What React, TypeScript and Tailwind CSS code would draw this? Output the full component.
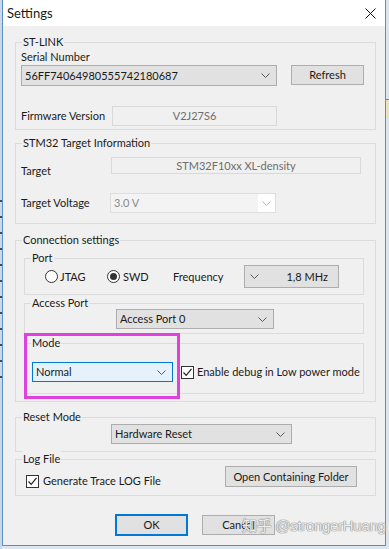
import React from "react";

function Chevron({ color = "#5a5a5a" }: { color?: string }) {
  return (
    <svg width="9" height="5" viewBox="0 0 9 5" className="shrink-0">
      <path d="M0.5 0.5 L4.5 4.5 L8.5 0.5" fill="none" stroke={color} strokeWidth="1" />
    </svg>
  );
}

function Group({
  title,
  className = "",
  children,
}: {
  title: string;
  className?: string;
  children?: React.ReactNode;
}) {
  return (
    <div className={`relative border border-[#dcdcdc] ${className}`}>
      <span className="absolute -top-[9px] left-[6px] bg-[#f0f0f0] px-px leading-[16px] whitespace-nowrap">
        {title}
      </span>
      {children}
    </div>
  );
}

function Combo({
  value,
  className = "",
}: {
  value: string;
  className?: string;
}) {
  return (
    <div
      className={`flex items-center border border-[#adadad] bg-[#e1e1e1] pl-[3px] pr-[6px] ${className}`}
    >
      <span className="flex-1 whitespace-nowrap">{value}</span>
      <Chevron />
    </div>
  );
}

function Check() {
  return (
    <div className="flex h-[13px] w-[13px] shrink-0 items-center justify-center border border-[#333333] bg-white">
      <svg width="11" height="11" viewBox="0 0 11 11">
        <path d="M1.5 5.5 L4.2 8.3 L9.5 1.8" fill="none" stroke="#222" strokeWidth="1.2" />
      </svg>
    </div>
  );
}

function Radio({ checked }: { checked?: boolean }) {
  return (
    <div className="flex h-[13px] w-[13px] shrink-0 items-center justify-center rounded-full border border-[#333333] bg-white">
      {checked && <div className="h-[7px] w-[7px] rounded-full bg-[#333333]" />}
    </div>
  );
}

export default function App() {
  return (
    <div className="relative flex h-[549px] w-[389px] overflow-hidden bg-[#d9e7f3] font-['Lato',sans-serif] text-[11px] leading-[16px] text-[#1a1a1a]">
      {/* background strip left */}
      <div className="flex h-full w-[2px] flex-col gap-[14px] bg-[#c9d9e8] pt-[200px]">
        {Array.from({ length: 12 }).map((_, i) => (
          <div key={i} className="h-[2px] w-[2px] bg-[#2e4f73]" />
        ))}
      </div>

      {/* window */}
      <div className="flex h-[546px] w-[384px] shrink-0 flex-col border-x border-b border-[#5b8fc4] bg-[#f0f0f0]">
        {/* title bar */}
        <div className="flex h-[26px] items-center bg-white">
          <span className="pl-[4px] text-[13px]">Settings</span>
          <svg width="11" height="11" viewBox="0 0 11 11" className="ml-auto mr-[9px]">
            <path d="M0.5 0.5 L10.5 10.5 M10.5 0.5 L0.5 10.5" stroke="#111" strokeWidth="1" />
          </svg>
        </div>

        <div className="flex flex-col pl-[12px] pr-[9px]">
          {/* ST-LINK */}
          <Group title="ST-LINK" className="mt-[16px] pl-[5px] pt-[6px] pb-[3px]">
            <div>Serial Number</div>
            <div className="flex items-start">
              <Combo value="56FF74064980555742180687" className="h-[21px] w-[256px]" />
              <div className="ml-[14px] flex h-[20px] w-[73px] items-center justify-center border border-[#adadad] bg-[#e1e1e1]">
                Refresh
              </div>
            </div>
            <div className="mt-[20px] flex items-center">
              <span className="w-[91px] shrink-0 whitespace-nowrap">Firmware Version</span>
              <div className="flex h-[20px] w-[165px] items-center justify-center border border-[#d9d9d9] bg-[#f0f0f0] text-[#6d6d6d]">
                V2J27S6
              </div>
            </div>
          </Group>

          {/* STM32 Target Information */}
          <Group title="STM32 Target Information" className="mt-[13px] pl-[5px] pt-[13px] pb-[10px]">
            <div className="flex items-start">
              <span className="mt-[6px] w-[90px] shrink-0">Target</span>
              <div className="flex h-[17px] w-[250px] items-center justify-center border border-[#d9d9d9] bg-[#f0f0f0] text-[#6d6d6d]">
                STM32F10xx XL-density
              </div>
            </div>
            <div className="mt-[14px] flex items-center">
              <span className="w-[89px] shrink-0 whitespace-nowrap">Target Voltage</span>
              <div className="flex h-[20px] w-[166px] items-center border border-[#dedede] bg-[#f3f3f3] text-[#8a8a8a]">
                <span className="flex-1 pl-[3px]">3.0 V</span>
                <div className="flex h-full w-[17px] items-center justify-center bg-white">
                  <Chevron color="#b5b5b5" />
                </div>
              </div>
            </div>
          </Group>

          {/* Connection settings */}
          <Group title="Connection settings" className="mt-[16px] pl-[8px] pr-[11px] pt-[17px] pb-[7px]">
            {/* Port */}
            <Group title="Port" className="pt-[6px] pb-[6px]">
              <div className="flex h-[23px] items-center">
                <div className="ml-[20px] flex w-[62px] shrink-0 items-center gap-[2px]">
                  <Radio />
                  <span>JTAG</span>
                </div>
                <div className="flex w-[66px] shrink-0 items-center gap-[3px]">
                  <Radio checked />
                  <span>SWD</span>
                </div>
                <span className="w-[71px] shrink-0">Frequency</span>
                <div className="flex h-[23px] w-[95px] items-center border border-[#adadad] bg-[#e1e1e1] pl-[5px] pr-[10px]">
                  <Chevron />
                  <span className="flex-1 text-right">1,8 MHz</span>
                </div>
              </div>
            </Group>

            {/* Access Port */}
            <Group title="Access Port" className="mt-[8px] pl-[91px] pt-[5px] pb-[4px]">
              <Combo value="Access Port 0" className="h-[20px] w-[158px]" />
            </Group>

            {/* Mode */}
            <Group title="Mode" className="mt-[9px] pl-[7px] pt-[18px] pb-[11px]">
              <div className="flex items-center">
                <div className="flex h-[20px] w-[141px] items-center border border-[#0078d7] bg-[#e5f1fb] pl-[3px] pr-[6px]">
                  <span className="flex-1">Normal</span>
                  <Chevron />
                </div>
                <div className="ml-[8px] flex items-center gap-[3px]">
                  <Check />
                  <span className="whitespace-nowrap">Enable debug in Low power mode</span>
                </div>
              </div>
            </Group>

            {/* highlight */}
            <div className="absolute left-[8px] top-[92px] h-[66px] w-[156px] border-[3px] border-[#e040e0]" />
          </Group>

          {/* Reset Mode */}
          <Group title="Reset Mode" className="mt-[15px] pl-[95px] pt-[6px] pb-[7px]">
            <Combo value="Hardware Reset" className="h-[20px] w-[181px]" />
          </Group>

          {/* Log File */}
          <Group title="Log File" className="mt-[7px] pl-[10px] pr-[18px] pt-[6px] pb-[6px]">
            <div className="flex items-start">
              <div className="mt-[7px] flex items-center gap-[4px]">
                <Check />
                <span>Generate Trace LOG File</span>
              </div>
              <div className="ml-auto flex h-[21px] w-[132px] items-center justify-center border border-[#adadad] bg-[#e1e1e1]">
                Open Containing Folder
              </div>
            </div>
          </Group>

          {/* buttons */}
          <div className="mt-[18px] flex items-start pl-[100px]">
            <div className="flex h-[22px] w-[73px] items-center justify-center border-2 border-[#0078d7] bg-[#e1e1e1]">
              OK
            </div>
            <div className="ml-[14px] mt-[1px] flex h-[20px] w-[73px] items-center justify-center border border-[#adadad] bg-[#e1e1e1]">
              Cancel
            </div>
          </div>
        </div>
      </div>

      {/* background strip right */}
      <div className="flex h-full flex-1 flex-col bg-[#dbe6f0]">
        <div className="h-[100px] border-b border-[#6f8296]" />
        <div className="h-[18px] bg-[#e9e3b8]" />
      </div>

      {/* watermark */}
      <div className="absolute left-[242px] top-[517px] whitespace-nowrap font-['Liberation_Sans','Noto_Sans_CJK_SC',sans-serif] text-[15px] leading-[18px] tracking-[-0.3px] text-[#ececec] [text-shadow:0_0_1px_#8a8a8a,0_0_1px_#8a8a8a,0_0_1px_#8a8a8a]">
        知乎 @strongerHuang
      </div>
    </div>
  );
}
